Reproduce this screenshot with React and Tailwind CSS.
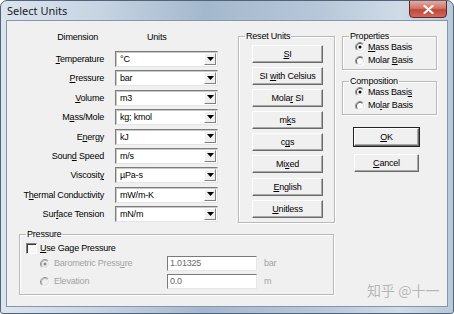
import React from 'react';

const U = ({ children }) => (
  <span className="underline decoration-1 underline-offset-[1px]">{children}</span>
);

const rows = [
  [<><U>T</U>emperature</>, '°C'],
  [<><U>P</U>ressure</>, 'bar'],
  [<><U>V</U>olume</>, 'm3'],
  [<>M<U>a</U>ss/Mole</>, 'kg; kmol'],
  [<>E<U>n</U>ergy</>, 'kJ'],
  [<>Soun<U>d</U> Speed</>, 'm/s'],
  [<>Viscosit<U>y</U></>, 'µPa-s'],
  [<>T<U>h</U>ermal Conductivity</>, 'mW/m-K'],
  [<>Sur<U>f</U>ace Tension</>, 'mN/m'],
];

const resets = [
  <><U>S</U>I</>,
  <>SI <U>w</U>ith Celsius</>,
  <>Mola<U>r</U> SI</>,
  <>m<U>k</U>s</>,
  <>c<U>g</U>s</>,
  <>Mi<U>x</U>ed</>,
  <><U>E</U>nglish</>,
  <><U>U</U>nitless</>,
];

function Radio({ on, off }) {
  return (
    <svg width="10" height="10" viewBox="0 0 12 12" className="shrink-0">
      <circle cx="6" cy="6" r="5" fill={off ? '#f0f0f0' : '#fbfbfb'} />
      <path d="M2.11 9.89 A5.5 5.5 0 0 1 9.89 2.11" stroke="#8a8a8a" fill="none" strokeWidth="1" />
      <path d="M9.89 2.11 A5.5 5.5 0 0 1 2.11 9.89" stroke="#ffffff" fill="none" strokeWidth="1" />
      <path d="M2.82 9.18 A4.5 4.5 0 0 1 9.18 2.82" stroke={off ? '#9a9a9a' : '#333'} fill="none" strokeWidth="1" />
      <path d="M9.18 2.82 A4.5 4.5 0 0 1 2.82 9.18" stroke="#dcdcdc" fill="none" strokeWidth="1" />
      {on && <circle cx="6" cy="6" r="1.8" fill={off ? '#8a8a8a' : '#000'} />}
    </svg>
  );
}

function Btn({ children, def }) {
  return (
    <div
      className={`flex items-center justify-center h-[18px] border border-t-white border-l-white border-r-[#6a6a6a] border-b-[#6a6a6a] bg-[#f0f0f0] shadow-[inset_-1px_-1px_0_#a8a8a8] leading-[12px] ${
        def ? 'outline outline-1 outline-[#222]' : ''
      }`}
    >
      <span className="whitespace-pre">{children}</span>
    </div>
  );
}

function Select({ value }) {
  return (
    <div className="flex h-[16px] w-[103px] border border-[#7c7c7c] border-r-[#e4e4e4] border-b-[#e4e4e4] bg-white shadow-[inset_1px_1px_0_#c8c8c8]">
      <div className="flex-1 pl-[4px] pt-[1px] leading-[13px]">{value}</div>
      <div className="w-[12px] m-[1px] flex items-center justify-center bg-[#f0f0f0] border border-t-white border-l-white border-r-[#808080] border-b-[#808080]">
        <svg width="7" height="5" viewBox="0 0 7 5">
          <path d="M0 0 H7 L3.5 4 Z" fill="#000" />
        </svg>
      </div>
    </div>
  );
}

function Group({ title, className, inner, children }) {
  return (
    <fieldset className={`border border-[#b9b9b9] shadow-[inset_1px_1px_0_#fff,1px_1px_0_#fff] ${className}`}>
      <legend className="ml-[6px] px-[1px] leading-[11px]">{title}</legend>
      <div className={inner}>{children}</div>
    </fieldset>
  );
}

function Field({ value }) {
  return (
    <div className="w-[90px] h-[15px] bg-white border border-[#7a7a7a] border-r-[#e6e6e6] border-b-[#e6e6e6] pl-[2px] leading-[13px] text-[#6a6a6a]">
      {value}
    </div>
  );
}

export default function App() {
  return (
    <div className="w-[454px] h-[314px] flex flex-col rounded-t-[7px] rounded-b-[3px] border border-[#53647a] bg-[linear-gradient(90deg,#dbe5ef_0%,#c6d4e3_22%,#a4b8cd_45%,#b6c7d9_70%,#cfdbe7_88%,#b9c9da_100%)] overflow-hidden">
      {/* title bar */}
      <div className="h-[19px] flex items-start justify-between">
        <div className="pl-[6px] pt-[3px] text-[11px] leading-[14px] text-[#1c1c1c] font-['Noto_Sans',sans-serif]">
          Select Units
        </div>
        <div className="mr-[6px] w-[38px] h-[18px] -mt-px flex items-center justify-center rounded-b-[4px] border border-[#5b2b27] bg-[linear-gradient(180deg,#e5aaa0_0%,#d0756a_45%,#c2463a_55%,#d06a5c_100%)]">
          <svg width="11" height="9" viewBox="0 0 11 9">
            <path d="M1.5 1 L9.5 8 M9.5 1 L1.5 8" stroke="#fff" strokeWidth="2.2" strokeLinecap="round" />
          </svg>
        </div>
      </div>

      {/* client */}
      <div className="mx-[5px] mb-[6px] flex-1 border border-[#8596a9] bg-[#f0f0f0] text-[9px] tracking-[-0.2px] text-black font-['Liberation_Sans',sans-serif] flex flex-col">
        <div className="flex items-start">
          {/* units table */}
          <div className="w-[231px] pt-[10px]">
            <div className="flex h-[13px] leading-[13px]">
              <div className="w-[97px] text-right pr-[6px]">Dimension</div>
              <div className="pl-[43px]">Units</div>
            </div>
            <div className="mt-[7px] flex flex-col gap-[3.4px]">
              {rows.map(([label, value], i) => (
                <div key={i} className="flex items-center h-[16px]">
                  <div className="w-[97px] text-right leading-[12px]">{label}</div>
                  <div className="ml-[11px]">
                    <Select value={value} />
                  </div>
                </div>
              ))}
            </div>
          </div>

          {/* reset units */}
          <Group title="Reset Units" className="mt-[9.5px] w-[97px]" inner="pt-[3.5px] pb-[4px] pl-[13px]">
            <div className="w-[71px] flex flex-col gap-[4.1px]">
              {resets.map((r, i) => (
                <Btn key={i}>{r}</Btn>
              ))}
            </div>
          </Group>

          {/* right column */}
          <div className="ml-[7px] w-[95px] mt-[9.5px] flex flex-col">
            <Group title="Properties" inner="pl-[12px] pb-[1px] -mt-[1px]">
              <div className="flex items-center gap-[3px] h-[13.5px]">
                <Radio on />
                <span><U>M</U>ass Basis</span>
              </div>
              <div className="flex items-center gap-[3px] h-[13.5px]">
                <Radio />
                <span>Molar <U>B</U>asis</span>
              </div>
            </Group>
            <Group title="Composition" className="mt-[6px]" inner="pl-[12px] pb-[1px] -mt-[1px]">
              <div className="flex items-center gap-[3px] h-[13.5px]">
                <Radio on />
                <span>Mass Basi<U>s</U></span>
              </div>
              <div className="flex items-center gap-[3px] h-[13.5px]">
                <Radio />
                <span>Mo<U>l</U>ar Basis</span>
              </div>
            </Group>
            <div className="ml-[12px] mt-[13.5px] w-[65px] flex flex-col gap-[8px]">
              <Btn def>
                <U>O</U>K
              </Btn>
              <Btn>
                <U>C</U>ancel
              </Btn>
            </div>
          </div>
        </div>

        {/* pressure */}
        <div className="flex items-start">
          <Group title="Pressure" className="ml-[12px] mt-[6.5px] w-[315px]" inner="pl-[6px] pb-[5px]">
            <div className="mt-[2px] h-[13px] flex items-center">
              <div className="w-[11px] h-[11px] border border-t-[#808080] border-l-[#808080] border-r-white border-b-white bg-[#f7f7f7] shadow-[inset_1px_1px_0_#3a3a3a]" />
              <span className="ml-[3px]">
                <U>U</U>se Gage Pressure
              </span>
            </div>
            <div className="mt-[1px] flex items-center h-[15px] pl-[14px] text-[#a3a3a3]">
              <div className="w-[127px] flex items-center gap-[4px]">
                <Radio on off />
                <span>Barometric Press<U>u</U>re</span>
              </div>
              <Field value="1.01325" />
              <span className="ml-[7px]">bar</span>
            </div>
            <div className="mt-[3px] flex items-center h-[15px] pl-[14px] text-[#a3a3a3]">
              <div className="w-[127px] flex items-center gap-[4px]">
                <Radio off />
                <span>Elevation</span>
              </div>
              <Field value="0.0" />
              <span className="ml-[7px]">m</span>
            </div>
          </Group>
          <div className="ml-[33px] mt-[59px] text-[14px] tracking-normal leading-[16px] text-[#b4b4b4] [text-shadow:0_0_1px_#fff] font-['Noto_Sans_CJK_SC',sans-serif] whitespace-nowrap">
            知乎 @十一
          </div>
        </div>
      </div>
    </div>
  );
}
